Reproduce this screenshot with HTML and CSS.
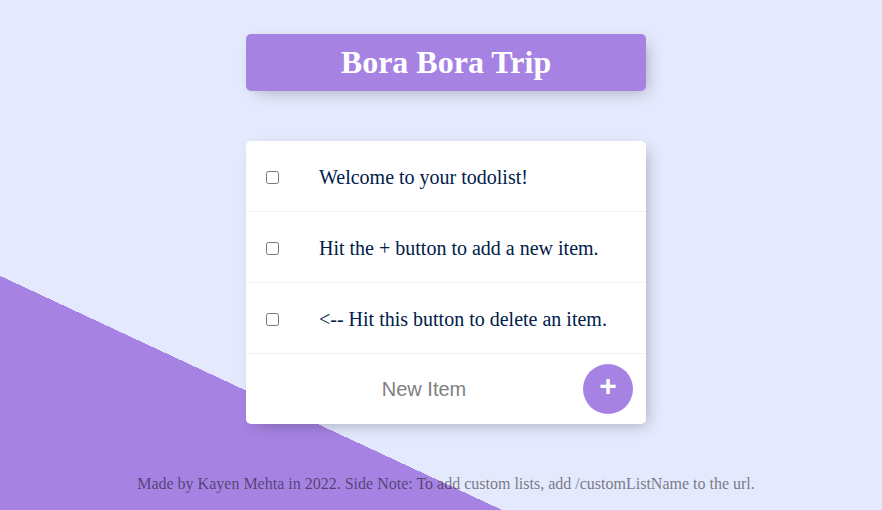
FILE: index.html
```html
<!DOCTYPE html>
<html lang="en">
<head>
<meta charset="utf-8">
<title>To Do List</title>
<link rel="stylesheet" href="styles.css">
</head>
<body>
  <div class="box heading">
    <h1 class="title">Bora Bora Trip</h1>
  </div>
  <div class="box list">
    <div class="item">
      <input type="checkbox" class="check">
      <p class="text">Welcome to your todolist!</p>
    </div>
    <div class="item">
      <input type="checkbox" class="check">
      <p class="text">Hit the + button to add a new item.</p>
    </div>
    <div class="item">
      <input type="checkbox" class="check">
      <p class="text">&lt;-- Hit this button to delete an item.</p>
    </div>
    <form class="item form-item">
      <input type="text" class="new-item" placeholder="New Item" autocomplete="off">
      <button type="button" class="add">+</button>
    </form>
  </div>
  <footer class="footer">Made by Kayen Mehta in 2022. Side Note: To add custom lists, add /customListName to the url.</footer>
</body>
</html>
```

FILE: styles.css
```css
html {
  background-color: #E4E9FD;
  background-image: linear-gradient(25deg, #A683E3 50%, #E4E9FD 50%);
  min-height: 963px;
  font-family: "Liberation Serif", "Times New Roman", serif;
}

body {
  margin: 0;
  padding: 34px 0 0 10px;
}

.box {
  width: 400px;
  margin: 0 auto 50px;
  background: #fff;
  border-radius: 5px;
  box-shadow: 5px 5px 15px -5px rgba(0, 0, 0, 0.3);
}

.heading {
  background-color: #A683E3;
  text-align: center;
}

.title {
  margin: 0;
  padding: 10px;
  height: 37px;
  line-height: 37px;
  font-size: 32px;
  font-weight: bold;
  color: #fff;
}

.item {
  min-height: 70px;
  display: flex;
  align-items: center;
  border-bottom: 1px solid #F1F1F1;
}

.item:last-child {
  border-bottom: 0;
}

.check {
  margin: 21px 20px 19px;
  width: 13px;
  height: 13px;
}

.text {
  margin: 0;
  padding: 21px 20px 19px;
  font-size: 20px;
  font-weight: 200;
  color: #00204a;
}

.form-item {
  margin: 0 0 0 20px;
  text-align: center;
}

.new-item {
  text-align: center;
  width: 276px;
  height: 60px;
  box-sizing: content-box;
  border: none;
  padding: 0 0 0 20px;
  margin: 0;
  font-family: "Liberation Sans", Arial, sans-serif;
  font-size: 20px;
  font-weight: 200;
  background: transparent;
}

.new-item::placeholder {
  color: grey;
  opacity: 1;
}

.add {
  margin-left: 21px;
  width: 50px;
  height: 50px;
  border-radius: 50%;
  border: 0;
  background-color: #A683E3;
  color: #fff;
  font-family: "Liberation Sans", Arial, sans-serif;
  font-size: 30px;
  font-weight: bold;
  line-height: 1;
  padding: 0 0 6px;
}

.footer {
  text-align: center;
  color: rgba(0, 0, 0, 0.5);
  font-size: 16px;
  line-height: 18px;
  padding-top: 1px;
}
```
